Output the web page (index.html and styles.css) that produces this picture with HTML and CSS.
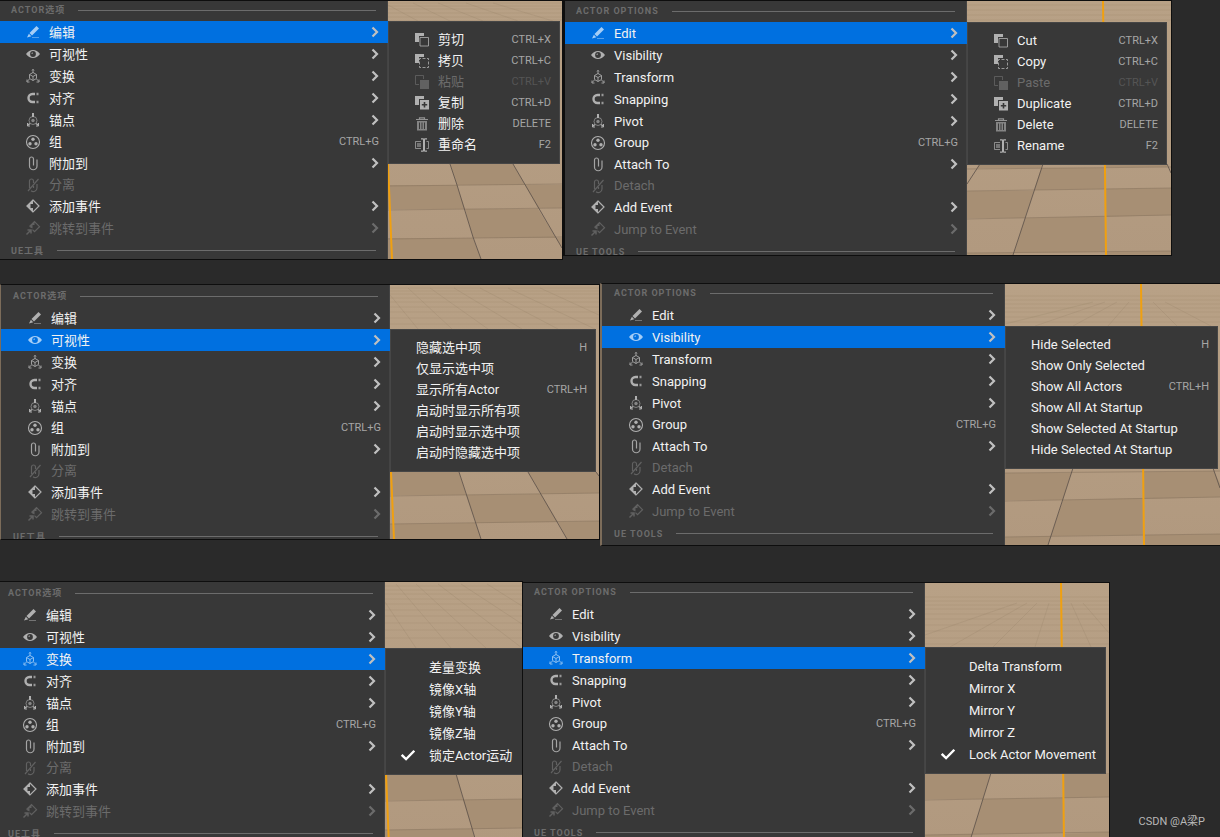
FILE: index.html
```html
<!DOCTYPE html>
<html lang="zh-CN">
<head>
<meta charset="utf-8">
<meta name="viewport" content="width=device-width, initial-scale=1">
<title>Actor menus</title>
<link rel="stylesheet" href="styles.css">
</head>
<body>
<svg class="sprite" aria-hidden="true">
  <symbol id="edit" viewBox="0 0 16 16"><path d="M11.500 2 14 4.500 7 11.500 4.500 9z" fill="currentColor"/><path d="M3.900 9.800 6.300 12.200 2 13.600z" fill="currentColor"/><path d="M7 13.500h7" stroke="currentColor" opacity=".5"/></symbol>
  <symbol id="eye" viewBox="0 0 16 16"><path fill-rule="evenodd" fill="currentColor" d="M1 8Q4 4 8 4t7 4q-3 4-7 4T1 8zM8 5.100a2.900 2.900 0 1 0 0 5.800 2.900 2.900 0 0 0 0-5.800z"/><path d="M6.200 8A1.800 1.800 0 0 1 8 6.200V8z" fill="currentColor" opacity=".6"/></symbol>
  <symbol id="transform" viewBox="0 0 16 16"><g fill="none" stroke="currentColor" opacity=".85"><path d="M8 1v4M4.500 11 2 13.500M11.500 11l2.500 2.500M2 11.500V14h2.500M14 11.500V14h-2.500M7 2.500 8 1.500l1 1"/><path d="M8 4.500 11.500 6.500v4L8 12.500l-3.500-2v-4zM4.500 6.500 8 8.500l3.500-2M8 8.500v4"/></g></symbol>
  <symbol id="snap" viewBox="0 0 16 16"><path d="M10 4H7.500a3.800 3.800 0 0 0 0 8H10" fill="none" stroke="currentColor" stroke-width="2.400"/><path d="M11.500 2.800H13.500v2.400h-2zM11.500 10.800H13.500v2.400h-2z" fill="currentColor" opacity=".8"/></symbol>
  <symbol id="pivot" viewBox="0 0 16 16"><g fill="none" stroke="currentColor"><path d="M8 1v4" stroke-width="2"/><circle cx="8" cy="8.500" r="4" opacity=".6"/><path d="M4.800 11.500 2.500 13.500M11.200 11.500 13.500 13.500" stroke-width="1.500"/><path d="M2.500 11v3H5M13.500 11v3H11"/></g><circle cx="8" cy="8.500" r="1.700" fill="currentColor" opacity=".65"/></symbol>
  <symbol id="group" viewBox="0 0 16 16"><circle cx="8" cy="8" r="6.500" fill="none" stroke="currentColor" stroke-width="1.100"/><g fill="currentColor"><circle cx="8" cy="5.300" r="1.700"/><circle cx="5" cy="9.700" r="1.700"/><circle cx="11" cy="9.700" r="1.700"/></g></symbol>
  <symbol id="attach" viewBox="0 0 16 16"><path d="M8.500 10.500V4a2 2 0 0 0-4 0v7a3.700 3.700 0 0 0 7.500 0V4.500" fill="none" stroke="currentColor" stroke-width="1.200" opacity=".9"/></symbol>
  <symbol id="detach" viewBox="0 0 16 16"><path d="M8.500 6V4a2 2 0 0 0-4 0v7M8.500 11V9M6 13.800a3.700 3.700 0 0 0 6-2.800V7M13.500 2 3 14" fill="none" stroke="currentColor" stroke-width="1.200" opacity=".8"/></symbol>
  <symbol id="event" viewBox="0 0 16 16"><path d="M8 2 14 8l-6 6-6-6z" fill="none" stroke="currentColor" stroke-width="1.200"/><path d="M8 1.500V6H5.500v4H8v4.500L1.500 8z" fill="currentColor"/></symbol>
  <symbol id="jump" viewBox="0 0 16 16"><g opacity=".8"><path d="M4.500 6.500 9.500 1.700l5 5-5 5-2-2" fill="none" stroke="currentColor" stroke-width="1.200"/><path d="M9.500 1.500V5H7.500v3.500L4.500 7z" fill="currentColor"/><path d="M1.500 14.500 5.500 10.500M2.500 10H6v3.500" fill="none" stroke="currentColor" stroke-width="1.500"/></g></symbol>
  <symbol id="chevron" viewBox="0 0 8 12"><path d="M1.500 1.500 6 6l-4.500 4.500" fill="none" stroke="currentColor" stroke-width="2.200"/></symbol>
  <symbol id="cut" viewBox="0 0 16 16"><path d="M1 1h9v3H5v6H1z" fill="currentColor"/><path d="M6 5.500h8.500V14H6z" fill="none" stroke="currentColor" opacity=".8"/></symbol>
  <symbol id="copy" viewBox="0 0 16 16"><path d="M1 1h9v3H5v6H1z" fill="currentColor"/><path d="M5.500 5.500h9v9h-9z" fill="none" stroke="currentColor" stroke-dasharray="3 1.500" stroke-dashoffset="1.500" opacity=".8"/></symbol>
  <symbol id="paste" viewBox="0 0 16 16"><path d="M5 10.500H1.500v-9h8V5" fill="none" stroke="currentColor" opacity=".7"/><path d="M6 6h9v9H6z" fill="currentColor" opacity=".8"/></symbol>
  <symbol id="duplicate" viewBox="0 0 16 16"><path d="M1 1h9v3H5v6H1z" fill="currentColor"/><path fill-rule="evenodd" d="M6 5h9v9.500H6zM9.700 7v2H7.800v1.600h1.900v2h1.600v-2h1.900V9h-1.900V7z" fill="currentColor"/></symbol>
  <symbol id="trash" viewBox="0 0 16 16"><g opacity=".75"><path d="M2 3.500h12M5.500 3V1.800h5V3" fill="none" stroke="currentColor" stroke-width="1.200"/><path fill-rule="evenodd" d="M3 5h10v9.500H3zM5 6.500v6.500h1V6.500zM7.500 6.500v6.500h1V6.500zM10 6.500v6.500h1V6.500z" fill="currentColor" opacity=".85"/></g></symbol>
  <symbol id="rename" viewBox="0 0 16 16"><path d="M7 4.500H1.500v7H7M12.500 4.500h2v7h-2" fill="none" stroke="currentColor" opacity=".7"/><path d="M3 6h4v4H3z" fill="currentColor" opacity=".5"/><path d="M10 2v12" stroke="currentColor" stroke-width="2"/><path d="M7 1.800h2l1 .7 1-.7h2M7 14.200h2l1-.7 1 .7h2" fill="none" stroke="currentColor" stroke-width="1.300"/></symbol>
</svg>

<main class="board">
  <div class="pair pair-edit">
    <section class="shot shot-a">
      <nav class="menu">
        <h2 class="heading">ACTOR选项</h2>
        <button class="item selected"><svg class="icon"><use href="#edit"/></svg><span class="label">编辑</span><svg class="chev"><use href="#chevron"/></svg></button>
        <button class="item"><svg class="icon"><use href="#eye"/></svg><span class="label">可视性</span><svg class="chev"><use href="#chevron"/></svg></button>
        <button class="item"><svg class="icon"><use href="#transform"/></svg><span class="label">变换</span><svg class="chev"><use href="#chevron"/></svg></button>
        <button class="item"><svg class="icon"><use href="#snap"/></svg><span class="label">对齐</span><svg class="chev"><use href="#chevron"/></svg></button>
        <button class="item"><svg class="icon"><use href="#pivot"/></svg><span class="label">锚点</span><svg class="chev"><use href="#chevron"/></svg></button>
        <button class="item leaf"><svg class="icon"><use href="#group"/></svg><span class="label">组</span><kbd class="key">CTRL+G</kbd></button>
        <button class="item"><svg class="icon"><use href="#attach"/></svg><span class="label">附加到</span><svg class="chev"><use href="#chevron"/></svg></button>
        <button class="item leaf" disabled><svg class="icon"><use href="#detach"/></svg><span class="label">分离</span></button>
        <button class="item"><svg class="icon"><use href="#event"/></svg><span class="label">添加事件</span><svg class="chev"><use href="#chevron"/></svg></button>
        <button class="item" disabled><svg class="icon"><use href="#jump"/></svg><span class="label">跳转到事件</span><svg class="chev"><use href="#chevron"/></svg></button>
        <h2 class="heading next">UE工具</h2>
      </nav>
      <div class="scene">
        <svg class="floor" viewBox="0 0 174 258" preserveAspectRatio="xMinYMin slice" aria-hidden="true">
          <g class="dark"><path d="M62 163H125L137 184H69zM0 184H69L77 208H0zM137 184H174V207H150zM77 208H150L168 237H85zM0 237H85L93 258H0zM168 237H174V246z"/></g>
          <g class="seam"><path d="M0 185 174 183M0 209 174 207M0 238 174 236"/></g>
          <g class="joint"><path d="M62 163 69 184 85 236 93 258M125 163 174 247"/></g>
          <g class="far"><path d="M0 2H174M0 5H174M0 8H174M0 12H174M0 16H174M0 20 174 19M0 4 30 20M25 2 62 20M50 2 95 20M78 2 130 20M105 2 165 20"/></g>
          <path class="edge" d="M0 163 4 258"/>
        </svg>
        <div class="submenu">
          <button class="item leaf"><svg class="icon"><use href="#cut"/></svg><span class="label">剪切</span><kbd class="key">CTRL+X</kbd></button>
          <button class="item leaf"><svg class="icon"><use href="#copy"/></svg><span class="label">拷贝</span><kbd class="key">CTRL+C</kbd></button>
          <button class="item leaf" disabled><svg class="icon"><use href="#paste"/></svg><span class="label">粘贴</span><kbd class="key">CTRL+V</kbd></button>
          <button class="item leaf"><svg class="icon"><use href="#duplicate"/></svg><span class="label">复制</span><kbd class="key">CTRL+D</kbd></button>
          <button class="item leaf"><svg class="icon"><use href="#trash"/></svg><span class="label">删除</span><kbd class="key">DELETE</kbd></button>
          <button class="item leaf"><svg class="icon"><use href="#rename"/></svg><span class="label">重命名</span><kbd class="key">F2</kbd></button>
        </div>
      </div>
    </section>

    <section class="shot shot-b" lang="en">
      <nav class="menu">
        <h2 class="heading">ACTOR OPTIONS</h2>
        <button class="item selected"><svg class="icon"><use href="#edit"/></svg><span class="label">Edit</span><svg class="chev"><use href="#chevron"/></svg></button>
        <button class="item"><svg class="icon"><use href="#eye"/></svg><span class="label">Visibility</span><svg class="chev"><use href="#chevron"/></svg></button>
        <button class="item"><svg class="icon"><use href="#transform"/></svg><span class="label">Transform</span><svg class="chev"><use href="#chevron"/></svg></button>
        <button class="item"><svg class="icon"><use href="#snap"/></svg><span class="label">Snapping</span><svg class="chev"><use href="#chevron"/></svg></button>
        <button class="item"><svg class="icon"><use href="#pivot"/></svg><span class="label">Pivot</span><svg class="chev"><use href="#chevron"/></svg></button>
        <button class="item leaf"><svg class="icon"><use href="#group"/></svg><span class="label">Group</span><kbd class="key">CTRL+G</kbd></button>
        <button class="item"><svg class="icon"><use href="#attach"/></svg><span class="label">Attach To</span><svg class="chev"><use href="#chevron"/></svg></button>
        <button class="item leaf" disabled><svg class="icon"><use href="#detach"/></svg><span class="label">Detach</span></button>
        <button class="item"><svg class="icon"><use href="#event"/></svg><span class="label">Add Event</span><svg class="chev"><use href="#chevron"/></svg></button>
        <button class="item" disabled><svg class="icon"><use href="#jump"/></svg><span class="label">Jump to Event</span><svg class="chev"><use href="#chevron"/></svg></button>
        <h2 class="heading next">UE TOOLS</h2>
      </nav>
      <div class="scene">
        <svg class="floor" viewBox="0 0 204 254" preserveAspectRatio="xMinYMin slice" aria-hidden="true">
          <g class="dark"><path d="M13 163H76L74 167H10zM138 163H200V166H138zM74 167H138V188L67 189zM0 190H67L58 217H0zM138 188 204 187V214L139 216zM58 217 139 215V251L47 252zM0 252H47V254H0zM139 251 204 250V254H139z"/></g>
          <g class="seam"><path d="M0 168 204 166M0 190 204 187M0 218 204 214M0 252 204 250"/></g>
          <g class="joint"><path d="M76 163 46 254M13 163 0 183M200 163 204 172"/></g>
          <g class="far"><path d="M0 4H204M0 9H204M0 14H204M0 19H204"/></g>
          <path class="edge" d="M136 0 139 254"/>
        </svg>
        <div class="submenu">
          <button class="item leaf"><svg class="icon"><use href="#cut"/></svg><span class="label">Cut</span><kbd class="key">CTRL+X</kbd></button>
          <button class="item leaf"><svg class="icon"><use href="#copy"/></svg><span class="label">Copy</span><kbd class="key">CTRL+C</kbd></button>
          <button class="item leaf" disabled><svg class="icon"><use href="#paste"/></svg><span class="label">Paste</span><kbd class="key">CTRL+V</kbd></button>
          <button class="item leaf"><svg class="icon"><use href="#duplicate"/></svg><span class="label">Duplicate</span><kbd class="key">CTRL+D</kbd></button>
          <button class="item leaf"><svg class="icon"><use href="#trash"/></svg><span class="label">Delete</span><kbd class="key">DELETE</kbd></button>
          <button class="item leaf"><svg class="icon"><use href="#rename"/></svg><span class="label">Rename</span><kbd class="key">F2</kbd></button>
        </div>
      </div>
    </section>
  </div>

  <div class="pair pair-visibility">
    <section class="shot shot-c">
      <nav class="menu">
        <h2 class="heading">ACTOR选项</h2>
        <button class="item"><svg class="icon"><use href="#edit"/></svg><span class="label">编辑</span><svg class="chev"><use href="#chevron"/></svg></button>
        <button class="item selected"><svg class="icon"><use href="#eye"/></svg><span class="label">可视性</span><svg class="chev"><use href="#chevron"/></svg></button>
        <button class="item"><svg class="icon"><use href="#transform"/></svg><span class="label">变换</span><svg class="chev"><use href="#chevron"/></svg></button>
        <button class="item"><svg class="icon"><use href="#snap"/></svg><span class="label">对齐</span><svg class="chev"><use href="#chevron"/></svg></button>
        <button class="item"><svg class="icon"><use href="#pivot"/></svg><span class="label">锚点</span><svg class="chev"><use href="#chevron"/></svg></button>
        <button class="item leaf"><svg class="icon"><use href="#group"/></svg><span class="label">组</span><kbd class="key">CTRL+G</kbd></button>
        <button class="item"><svg class="icon"><use href="#attach"/></svg><span class="label">附加到</span><svg class="chev"><use href="#chevron"/></svg></button>
        <button class="item leaf" disabled><svg class="icon"><use href="#detach"/></svg><span class="label">分离</span></button>
        <button class="item"><svg class="icon"><use href="#event"/></svg><span class="label">添加事件</span><svg class="chev"><use href="#chevron"/></svg></button>
        <button class="item" disabled><svg class="icon"><use href="#jump"/></svg><span class="label">跳转到事件</span><svg class="chev"><use href="#chevron"/></svg></button>
        <h2 class="heading next">UE工具</h2>
      </nav>
      <div class="scene">
        <svg class="floor" viewBox="0 0 209 254" preserveAspectRatio="xMinYMin slice" aria-hidden="true">
          <g class="dark"><path d="M0 187H69L76 210H0zM138 187H206L209 190V208L151 209zM76 210 151 209 168 237 86 238zM0 239 86 238 91 254H0zM168 237 209 236V254H177z"/></g>
          <g class="seam"><path d="M0 211 209 208M0 239 209 236"/></g>
          <g class="joint"><path d="M69 187 91 254M138 187 177 254M206 187 209 191"/></g>
          <g class="far"><path d="M0 3H209M0 6H209M0 9H209M0 13H209M0 17H209M0 22H209M0 27H209M0 33H209M0 39H209M0 10 28 44M18 3 62 44M40 3 98 44M64 3 132 44M90 3 168 44M118 3 205 44M150 3 209 30"/></g>
          <path class="edge" d="M1 187 4 254"/>
        </svg>
        <div class="submenu plain">
          <button class="item leaf"><span class="label">隐藏选中项</span><kbd class="key">H</kbd></button>
          <button class="item leaf"><span class="label">仅显示选中项</span></button>
          <button class="item leaf"><span class="label">显示所有Actor</span><kbd class="key">CTRL+H</kbd></button>
          <button class="item leaf"><span class="label">启动时显示所有项</span></button>
          <button class="item leaf"><span class="label">启动时显示选中项</span></button>
          <button class="item leaf"><span class="label">启动时隐藏选中项</span></button>
        </div>
      </div>
    </section>

    <section class="shot shot-d" lang="en">
      <nav class="menu">
        <h2 class="heading">ACTOR OPTIONS</h2>
        <button class="item"><svg class="icon"><use href="#edit"/></svg><span class="label">Edit</span><svg class="chev"><use href="#chevron"/></svg></button>
        <button class="item selected"><svg class="icon"><use href="#eye"/></svg><span class="label">Visibility</span><svg class="chev"><use href="#chevron"/></svg></button>
        <button class="item"><svg class="icon"><use href="#transform"/></svg><span class="label">Transform</span><svg class="chev"><use href="#chevron"/></svg></button>
        <button class="item"><svg class="icon"><use href="#snap"/></svg><span class="label">Snapping</span><svg class="chev"><use href="#chevron"/></svg></button>
        <button class="item"><svg class="icon"><use href="#pivot"/></svg><span class="label">Pivot</span><svg class="chev"><use href="#chevron"/></svg></button>
        <button class="item leaf"><svg class="icon"><use href="#group"/></svg><span class="label">Group</span><kbd class="key">CTRL+G</kbd></button>
        <button class="item"><svg class="icon"><use href="#attach"/></svg><span class="label">Attach To</span><svg class="chev"><use href="#chevron"/></svg></button>
        <button class="item leaf" disabled><svg class="icon"><use href="#detach"/></svg><span class="label">Detach</span></button>
        <button class="item"><svg class="icon"><use href="#event"/></svg><span class="label">Add Event</span><svg class="chev"><use href="#chevron"/></svg></button>
        <button class="item" disabled><svg class="icon"><use href="#jump"/></svg><span class="label">Jump to Event</span><svg class="chev"><use href="#chevron"/></svg></button>
        <h2 class="heading next">UE TOOLS</h2>
      </nav>
      <div class="scene">
        <svg class="floor" viewBox="0 0 215 261" preserveAspectRatio="xMinYMin slice" aria-hidden="true">
          <g class="dark"><path d="M0 189H66L58 216H0zM138 188 209 187 215 200V213L138 215zM58 216 138 214V251L46 252zM0 253 46 252 43 261H0zM139 251 215 250V261H139z"/></g>
          <g class="seam"><path d="M0 189 215 187M0 217 215 213M0 253 215 250"/></g>
          <g class="joint"><path d="M68 184 43 261M208 184 215 204"/></g>
          <g class="far"><path d="M0 12H215M0 16H215M0 20H215M0 24H215M0 28H215M0 33H215M0 38H215M100 18 30 42M112 18 68 42M124 18 103 42M148 18 172 42M160 18 206 42M88 18 0 40"/></g>
          <path class="edge" d="M136 0 139 261"/>
        </svg>
        <div class="submenu plain">
          <button class="item leaf"><span class="label">Hide Selected</span><kbd class="key">H</kbd></button>
          <button class="item leaf"><span class="label">Show Only Selected</span></button>
          <button class="item leaf"><span class="label">Show All Actors</span><kbd class="key">CTRL+H</kbd></button>
          <button class="item leaf"><span class="label">Show All At Startup</span></button>
          <button class="item leaf"><span class="label">Show Selected At Startup</span></button>
          <button class="item leaf"><span class="label">Hide Selected At Startup</span></button>
        </div>
      </div>
    </section>
  </div>

  <div class="pair pair-transform">
    <section class="shot shot-e">
      <nav class="menu">
        <h2 class="heading">ACTOR选项</h2>
        <button class="item"><svg class="icon"><use href="#edit"/></svg><span class="label">编辑</span><svg class="chev"><use href="#chevron"/></svg></button>
        <button class="item"><svg class="icon"><use href="#eye"/></svg><span class="label">可视性</span><svg class="chev"><use href="#chevron"/></svg></button>
        <button class="item selected"><svg class="icon"><use href="#transform"/></svg><span class="label">变换</span><svg class="chev"><use href="#chevron"/></svg></button>
        <button class="item"><svg class="icon"><use href="#snap"/></svg><span class="label">对齐</span><svg class="chev"><use href="#chevron"/></svg></button>
        <button class="item"><svg class="icon"><use href="#pivot"/></svg><span class="label">锚点</span><svg class="chev"><use href="#chevron"/></svg></button>
        <button class="item leaf"><svg class="icon"><use href="#group"/></svg><span class="label">组</span><kbd class="key">CTRL+G</kbd></button>
        <button class="item"><svg class="icon"><use href="#attach"/></svg><span class="label">附加到</span><svg class="chev"><use href="#chevron"/></svg></button>
        <button class="item leaf" disabled><svg class="icon"><use href="#detach"/></svg><span class="label">分离</span></button>
        <button class="item"><svg class="icon"><use href="#event"/></svg><span class="label">添加事件</span><svg class="chev"><use href="#chevron"/></svg></button>
        <button class="item" disabled><svg class="icon"><use href="#jump"/></svg><span class="label">跳转到事件</span><svg class="chev"><use href="#chevron"/></svg></button>
        <h2 class="heading next">UE工具</h2>
      </nav>
      <div class="scene">
        <svg class="floor" viewBox="0 0 137 263" preserveAspectRatio="xMinYMin slice" aria-hidden="true">
          <g class="dark"><path d="M0 192H72L78 218H0zM78 218 137 217V246L87 247zM0 248 87 247 92 263H0z"/></g>
          <g class="seam"><path d="M0 219 137 217M0 248 137 246"/></g>
          <g class="joint"><path d="M71 192 92 263"/></g>
          <g class="far"><path d="M0 4H137M0 8H137M0 12H137M0 17H137M0 22H137M0 28H137M0 34H137M0 41H137M0 48H137M0 56H137M0 20 31 66M11 2 66 66M31 2 101 66M53 2 137 66M76 2 137 42M102 2 137 24"/></g>
          <path class="edge" d="M1 192 4 263"/>
        </svg>
        <div class="submenu checks">
          <button class="item"><span class="label">差量变换</span></button>
          <button class="item"><span class="label">镜像X轴</span></button>
          <button class="item"><span class="label">镜像Y轴</span></button>
          <button class="item"><span class="label">镜像Z轴</span></button>
          <label class="item"><input class="tick" type="checkbox" checked><span class="label">锁定Actor运动</span></label>
        </div>
      </div>
    </section>

    <section class="shot shot-f" lang="en">
      <nav class="menu">
        <h2 class="heading">ACTOR OPTIONS</h2>
        <button class="item"><svg class="icon"><use href="#edit"/></svg><span class="label">Edit</span><svg class="chev"><use href="#chevron"/></svg></button>
        <button class="item"><svg class="icon"><use href="#eye"/></svg><span class="label">Visibility</span><svg class="chev"><use href="#chevron"/></svg></button>
        <button class="item selected"><svg class="icon"><use href="#transform"/></svg><span class="label">Transform</span><svg class="chev"><use href="#chevron"/></svg></button>
        <button class="item"><svg class="icon"><use href="#snap"/></svg><span class="label">Snapping</span><svg class="chev"><use href="#chevron"/></svg></button>
        <button class="item"><svg class="icon"><use href="#pivot"/></svg><span class="label">Pivot</span><svg class="chev"><use href="#chevron"/></svg></button>
        <button class="item leaf"><svg class="icon"><use href="#group"/></svg><span class="label">Group</span><kbd class="key">CTRL+G</kbd></button>
        <button class="item"><svg class="icon"><use href="#attach"/></svg><span class="label">Attach To</span><svg class="chev"><use href="#chevron"/></svg></button>
        <button class="item leaf" disabled><svg class="icon"><use href="#detach"/></svg><span class="label">Detach</span></button>
        <button class="item"><svg class="icon"><use href="#event"/></svg><span class="label">Add Event</span><svg class="chev"><use href="#chevron"/></svg></button>
        <button class="item" disabled><svg class="icon"><use href="#jump"/></svg><span class="label">Jump to Event</span><svg class="chev"><use href="#chevron"/></svg></button>
        <h2 class="heading next">UE TOOLS</h2>
      </nav>
      <div class="scene">
        <svg class="floor" viewBox="0 0 184 261" preserveAspectRatio="xMinYMin slice" aria-hidden="true">
          <g class="dark"><path d="M0 190H66L58 216H0zM138 190H184V214L138 215zM58 216 138 215V250L47 251zM0 252 47 251 44 261H0zM139 251 184 249V261H139z"/></g>
          <g class="seam"><path d="M0 217 184 214M0 252 184 249"/></g>
          <g class="joint"><path d="M66 190 44 261"/></g>
          <g class="far"><path d="M0 14H184M0 18H184M0 22H184M0 26H184M0 31H184M0 36H184M0 42H184M0 48H184M0 55H184M0 61H184M92 20 0 52M102 20 25 64M112 20 68 64M124 20 110 64M146 20 166 64M158 20 184 50"/></g>
          <path class="edge" d="M136 0 139 261"/>
        </svg>
        <div class="submenu checks">
          <button class="item"><span class="label">Delta Transform</span></button>
          <button class="item"><span class="label">Mirror X</span></button>
          <button class="item"><span class="label">Mirror Y</span></button>
          <button class="item"><span class="label">Mirror Z</span></button>
          <label class="item"><input class="tick" type="checkbox" checked><span class="label">Lock Actor Movement</span></label>
        </div>
      </div>
    </section>
    <p class="credit">CSDN @A梁P</p>
  </div>
</main>
</body>
</html>
```
FILE: styles.css
```css
* {
  box-sizing: border-box;
}

body {
  margin: 0;
  height: 100vh;
  overflow: hidden;
  background: #2a2a2a;
  color: #f2f2f2;
  font-family: Roboto, "Noto Sans CJK SC", sans-serif;
  font-size: 13px;
}

.sprite {
  display: none;
}

.pair {
  display: grid;
  align-items: start;
}

.pair-edit {
  grid-template-columns: 563fr 609fr 48fr;
  margin-bottom: 23px;
}

.pair-visibility {
  grid-template-columns: 600fr 620fr;
  margin-bottom: 35px;
}

.pair-transform {
  grid-template-columns: 523fr 587fr 110fr;
}

/* One menu with the viewport that shows beside it */
.shot {
  --top: 2px;
  --pad: 11px;
  --foot: 20px;
  --row: 0;
  --inset: 2px;
  display: grid;
  min-width: 0;
  border: solid #0e0e0e;
  border-width: 1px 1px 1px 0;
}

.shot-a {
  grid-template-columns: 388fr 174fr;
}

.shot-b {
  --top: 3px;
  --foot: 15px;
  --inset: 4px;
  grid-template-columns: 402fr 204fr;
  border-left-width: 2px;
}

.shot-c {
  --top: 4px;
  --pad: 12px;
  --foot: 14px;
  --row: 1;
  --inset: 3px;
  grid-template-columns: 389fr 209fr;
  margin-top: 1px;
  border-left: 1px solid #7c6c5a;
}

.shot-d {
  --pad: 12px;
  --foot: 23px;
  --row: 1;
  grid-template-columns: 403fr 215fr;
  border-left: 2px solid #7c6c5a;
  border-right: 0;
}

.shot-e {
  --top: 4px;
  --pad: 8px;
  --row: 2;
  --inset: 0px;
  grid-template-columns: 385fr 137fr;
}

.shot-f {
  --row: 2;
  --inset: 3px;
  grid-template-columns: 402fr 184fr;
  margin-top: 1px;
}

.menu {
  min-width: 0;
  padding-top: var(--top);
  background: #383838;
  border-right: 1px solid #444;
}

.heading {
  display: flex;
  align-items: center;
  gap: 13px;
  height: 18px;
  margin: 0;
  padding: 0 11px 4px var(--pad);
  overflow: hidden;
  color: #6c6c6c;
  font-size: 9px;
  font-weight: 700;
  line-height: 14px;
  letter-spacing: 1px;
  white-space: nowrap;
}

.heading::after {
  content: "";
  flex: 1;
  height: 1px;
  background: #6c6c6c;
}

.heading.next {
  align-items: flex-start;
  height: var(--foot);
  padding-top: 5px;
  padding-bottom: 0;
}

.heading.next::after {
  margin-top: 6px;
}

.item {
  display: flex;
  align-items: center;
  gap: 8px;
  width: 100%;
  height: 22px;
  margin: 0;
  padding: 0 8px 0 calc(var(--pad) + 14px);
  border: 0;
  background: none;
  color: inherit;
  font: inherit;
  line-height: 20px;
  text-align: left;
  white-space: nowrap;
}

.menu .selected {
  width: calc(100% + 1px);
  padding-right: 9px;
  background: #0070e0;
}

.label {
  flex: 1;
  padding-top: 2px;
}

.leaf {
  height: 21px;
}

.leaf .label {
  padding-top: 0;
}

.icon {
  flex: none;
  width: 16px;
  height: 16px;
  color: #b0b0b0;
}

.selected .icon {
  color: #a4cdf6;
}

.chev {
  flex: none;
  width: 8px;
  height: 12px;
  color: #c0c0c0;
}

.key {
  color: #a6a6a6;
  font: inherit;
  font-size: 11px;
}

.item:disabled,
.item:disabled .icon,
.item:disabled .chev {
  color: #6b6b6b;
}

.item:disabled .key {
  color: #555;
}

.scene {
  position: relative;
  min-width: 0;
  padding: calc(var(--top) + 18px + var(--row) * 22px) var(--inset) 0 0;
  overflow: hidden;
  background: linear-gradient(#b8a186, #b1997f);
}

.floor {
  position: absolute;
  inset: 0;
  width: 100%;
  height: 100%;
}

.dark {
  fill: #a78f74;
}

.seam {
  fill: none;
  stroke: #8a7660;
  opacity: .6;
}

.joint {
  fill: none;
  stroke: #5f544b;
  opacity: .85;
}

.far {
  fill: none;
  stroke: #8d7861;
  opacity: .2;
}

.edge {
  fill: none;
  stroke: #f0a010;
  stroke-width: 2;
}

.submenu {
  position: relative;
  padding: 7px 0 8px;
  border: 1px solid #464646;
  background: #383838;
}

.submenu .item {
  padding-left: 25px;
  padding-right: 8px;
}

.submenu.checks .item {
  padding-left: 43px;
}

.submenu.checks label.item {
  padding-left: 14px;
  gap: 13px;
}

.shot-e .submenu {
  border-right: 0;
}

.tick {
  flex: none;
  width: 16px;
  height: 16px;
  margin: 0;
  appearance: none;
}

.tick:checked {
  background: #fff;
  clip-path: polygon(5% 54%, 16% 44%, 38% 66%, 84% 18%, 95% 28%, 38% 86%);
}

.credit {
  align-self: end;
  margin: 0 0 13px;
  padding-right: 15px;
  color: #b8b8b8;
  font-size: 11px;
  line-height: 16px;
  text-align: right;
  white-space: nowrap;
}
```
